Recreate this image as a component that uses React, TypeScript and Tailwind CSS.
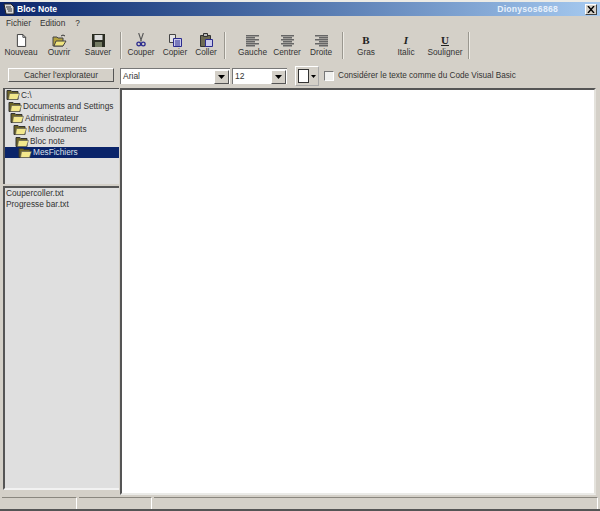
function Doc() {
  return (
    <svg width="11" height="13" viewBox="0 0 12 14">
      <path d="M1.5.5h6l3 3v10h-9z" fill="#fff" stroke="#333" />
      <path d="M7.5.5v3h3" fill="none" stroke="#333" />
    </svg>
  );
}
function Open() {
  return (
    <svg width="15" height="13" viewBox="0 0 15 13">
      <path d="M1 3h4l1 1h5v8H1z" fill="#b3a13e" stroke="#444" />
      <path d="M2 12l2-5h10l-3 5z" fill="#efe47e" stroke="#444" />
      <path d="M9 2q2-2 4 0" fill="none" stroke="#333" />
    </svg>
  );
}
function Save() {
  return (
    <svg width="13" height="13" viewBox="0 0 13 13">
      <rect width="13" height="13" fill="#2a2d22" />
      <rect x="2.5" y="1" width="8" height="5" fill="#dcdcdc" />
      <rect x="3" y="8" width="7" height="5" fill="#747b62" />
    </svg>
  );
}
function Cut() {
  return (
    <svg width="10" height="14" viewBox="0 0 10 15">
      <path d="M2.5 0l3 9M7.5 0l-3 9" stroke="#555" strokeWidth="1.2" fill="none" />
      <circle cx="2.6" cy="11.8" r="2" fill="none" stroke="#2b2b8e" strokeWidth="1.4" />
      <circle cx="7.4" cy="11.8" r="2" fill="none" stroke="#2b2b8e" strokeWidth="1.4" />
    </svg>
  );
}
function Copy() {
  return (
    <svg width="13" height="13" viewBox="0 0 13 13">
      <path d="M.5.5h6v8h-6z" fill="#e4e4e4" stroke="#444" />
      <path d="M4.5 4.5h8v8h-8z" fill="#c9c9ea" stroke="#2b2b8e" />
      <path d="M6 7h5M6 9h5M6 11h5" stroke="#2b2b8e" />
    </svg>
  );
}
function Paste() {
  return (
    <svg width="13" height="14" viewBox="0 0 13 14">
      <path d="M.5 2.5h10v11H.5z" fill="#6d6a52" stroke="#333" />
      <path d="M3.5.5h4v3h-4z" fill="#b9b9b9" stroke="#333" />
      <path d="M5.5 6.5h7v7h-7z" fill="#c9c9ea" stroke="#2b2b8e" />
    </svg>
  );
}
function Align({ kind }: { kind: "l" | "c" | "r" }) {
  const rows = [0, 1, 2, 3, 4, 5];
  return (
    <svg width="13" height="12" viewBox="0 0 13 12">
      {rows.map((i) => {
        const w = i % 2 === 0 ? 13 : 9;
        const x = kind === "l" ? 0 : kind === "c" ? (13 - w) / 2 : 13 - w;
        return <rect key={i} x={x} y={i * 2} width={w} height="1.5" fill="#666" />;
      })}
    </svg>
  );
}
function Letter({ children, className }: { children: string; className: string }) {
  return <span className={`block font-['Liberation_Serif',serif] text-[11px] leading-[13px] font-bold text-[#222] ${className}`}>{children}</span>;
}
function Folder() {
  return (
    <svg width="14" height="11" viewBox="0 0 14 11" className="shrink-0">
      <path d="M1 1.5h4l1 1h6v8H1z" fill="#6b6326" stroke="#333" />
      <path d="M2.5 10.5l1-6h10l-2 6z" fill="#f3e88c" stroke="#555" strokeWidth="0.6" />
    </svg>
  );
}

function Tool({ label, w, icon }: { label: string; w: string; icon: React.ReactNode }) {
  return (
    <div className={`flex flex-col items-center ${w}`}>
      <div className="flex h-[15px] items-end justify-center">{icon}</div>
      <span className="text-[8.3px] leading-[11px] whitespace-nowrap text-[#333]">{label}</span>
    </div>
  );
}
function Sep({ m }: { m: string }) {
  return <div className={`h-[27px] w-[2px] shrink-0 border-r border-l border-r-[#eeece6] border-l-[#9a978f] ${m}`} />;
}
function Arrow() {
  return (
    <div className="flex h-[14px] w-[15px] items-center justify-center border border-t-white border-r-[#555] border-b-[#555] border-l-white bg-[#d4d0c8]">
      <svg width="7" height="4" viewBox="0 0 7 4"><path d="M0 0h7L3.5 4z" fill="#000" /></svg>
    </div>
  );
}
function Combo({ text, w }: { text: string; w: string }) {
  return (
    <div className={`flex h-[16px] items-center justify-between self-start border-t border-l border-t-[#777] border-l-[#777] bg-white pr-px pl-[2px] mt-[2px] ${w}`}>
      <span className="text-[8.5px] leading-none text-[#333]">{text}</span>
      <Arrow />
    </div>
  );
}

const tree = [
  { t: "C:\\", m: "ml-[1px]" },
  { t: "Documents and Settings", m: "ml-[3px]" },
  { t: "Administrateur", m: "ml-[5px]" },
  { t: "Mes documents", m: "ml-[8px]" },
  { t: "Bloc note", m: "ml-[10px]" },
];

export default function App() {
  return (
    <div className="flex h-[511px] w-[600px] flex-col overflow-hidden bg-[#d4d0c8] font-['Liberation_Sans',sans-serif]">
      <div className="h-[2px] shrink-0 bg-[#ecebe6]" />
      <div className="flex h-[14px] shrink-0 items-center justify-between bg-gradient-to-r from-[#0a246a] to-[#a6caf0] pr-[3px] pl-[3px]">
        <div className="flex items-center gap-[2px]">
          <svg width="12" height="12" viewBox="0 0 12 12">
            <path d="M1 1h7l3 3v7H3z" fill="#d8d8d8" stroke="#222" />
            <path d="M3 4h5M4 6h5M5 8h4" stroke="#333" />
          </svg>
          <span className="text-[8.6px] leading-none font-bold text-white">Bloc Note</span>
        </div>
        <div className="flex items-center gap-[27px]">
          <span className="text-[8.6px] leading-none font-bold tracking-[0.25px] text-[#e8f1fb]">Dionysos6868</span>
          <div className="flex h-[11px] w-[12px] items-center justify-center border border-t-white border-r-[#444] border-b-[#444] border-l-white bg-[#d4d0c8]">
            <svg width="8" height="7" viewBox="0 0 8 7"><path d="M1 0l6 7M7 0L1 7" stroke="#000" strokeWidth="1.4" /></svg>
          </div>
        </div>
      </div>

      <div className="flex h-[14px] shrink-0 items-center gap-[9px] pt-[1px] pl-[6px] text-[8.3px] leading-none text-[#333]">
        <span>Fichier</span>
        <span>Edition</span>
        <span className="ml-[1px]">?</span>
      </div>

      <div className="flex h-[29px] shrink-0 items-start pt-[2px] pl-[3px]">
        <Tool label="Nouveau" w="w-[36px]" icon={<Doc />} />
        <Tool label="Ouvrir" w="w-[40px]" icon={<Open />} />
        <Tool label="Sauver" w="w-[38px]" icon={<Save />} />
        <Sep m="ml-[3px] mr-[1px]" />
        <Tool label="Couper" w="w-[36px]" icon={<Cut />} />
        <Tool label="Copier" w="w-[32px]" icon={<Copy />} />
        <Tool label="Coller" w="w-[30px]" icon={<Paste />} />
        <Sep m="ml-[3px] mr-[8px]" />
        <Tool label="Gauche" w="w-[37px]" icon={<Align kind="l" />} />
        <Tool label="Centrer" w="w-[32px]" icon={<Align kind="c" />} />
        <Tool label="Droite" w="w-[36px]" icon={<Align kind="r" />} />
        <Sep m="ml-[3px] mr-[8px]" />
        <Tool label="Gras" w="w-[28px]" icon={<Letter className="">B</Letter>} />
        <Tool label="Italic" w="w-[34px] ml-[9px]" icon={<Letter className="italic">I</Letter>} />
        <Tool label="Souligner" w="w-[40px] ml-[2px]" icon={<Letter className="underline">U</Letter>} />
        <Sep m="ml-[3px]" />
      </div>

      <div className="mt-[7px] flex h-[20px] shrink-0 items-center pl-[8px]">
        <div className="mt-[2px] flex h-[14px] w-[106px] items-center justify-center self-start border border-t-white border-r-[#555] border-b-[#555] border-l-white text-[8.3px] leading-none text-[#333]">
          Cacher l'explorateur
        </div>
        <Combo text="Arial" w="w-[110px] ml-[6px]" />
        <Combo text="12" w="w-[55px] ml-[2px]" />
        <div className="ml-[8px] flex h-[20px] w-[24px] items-center gap-[2px] border border-t-white border-r-[#aaa] border-b-[#aaa] border-l-white pl-[2px]">
          <div className="h-[14px] w-[11px] border border-[#333] bg-white" />
          <svg width="5" height="3" viewBox="0 0 5 3"><path d="M0 0h5L2.5 3z" fill="#000" /></svg>
        </div>
        <div className="ml-[5px] h-[10px] w-[10px] border border-t-[#777] border-r-white border-b-white border-l-[#777] bg-[#f0f0ee]" />
        <span className="ml-[4px] text-[8.2px] leading-none whitespace-nowrap text-[#333]">Considérer le texte comme du Code Visual Basic</span>
      </div>

      <div className="mt-[2px] flex h-[407px] shrink-0 pl-[3px]">
        <div className="flex w-[116px] shrink-0 flex-col">
          <div className="h-[96px] shrink-0 overflow-hidden border-t border-l-2 border-t-[#555] border-l-[#555] bg-[#dfdfdf]">
            {tree.map((r) => (
              <div key={r.t} className={`flex h-[11.6px] items-center gap-[1px] text-[8.3px] leading-none text-[#333] ${r.m}`}>
                <Folder />
                <span className="whitespace-nowrap">{r.t}</span>
              </div>
            ))}
            <div className="flex h-[11px] items-center gap-[1px] bg-[#0a246a] pl-[13px] text-[8.3px] leading-none text-[#dbe0ea]">
              <Folder />
              <span>MesFichiers</span>
            </div>
          </div>
          <div className="mt-[2px] h-[304px] shrink-0 border-t-2 border-b-2 border-l-2 border-t-[#555] border-b-[#f2f2f2] border-l-[#555] bg-[#dfdfdf] pl-[1px] text-[8.3px] leading-[10.5px] text-[#333]">
            <div>Coupercoller.txt</div>
            <div>Progresse bar.txt</div>
          </div>
        </div>
        <div className="ml-[1px] h-[407px] w-[476px] shrink-0 border-t-2 border-r-2 border-b-2 border-l-2 border-t-[#555] border-r-[#e4e2dc] border-b-[#ebebe8] border-l-[#555] bg-white" />
      </div>

      <div className="mt-[2px] flex h-[12px] shrink-0 px-[2px]">
        <div className="mr-[2px] w-[75px] border-t border-r border-t-[#8a877f] border-r-white" />
        <div className="mr-[2px] w-[73px] border-t border-r border-t-[#8a877f] border-r-white" />
        <div className="flex-1 border-t border-r border-t-[#8a877f] border-r-white" />
      </div>
      <div className="h-[2px] shrink-0 bg-[#555]" />
    </div>
  );
}
